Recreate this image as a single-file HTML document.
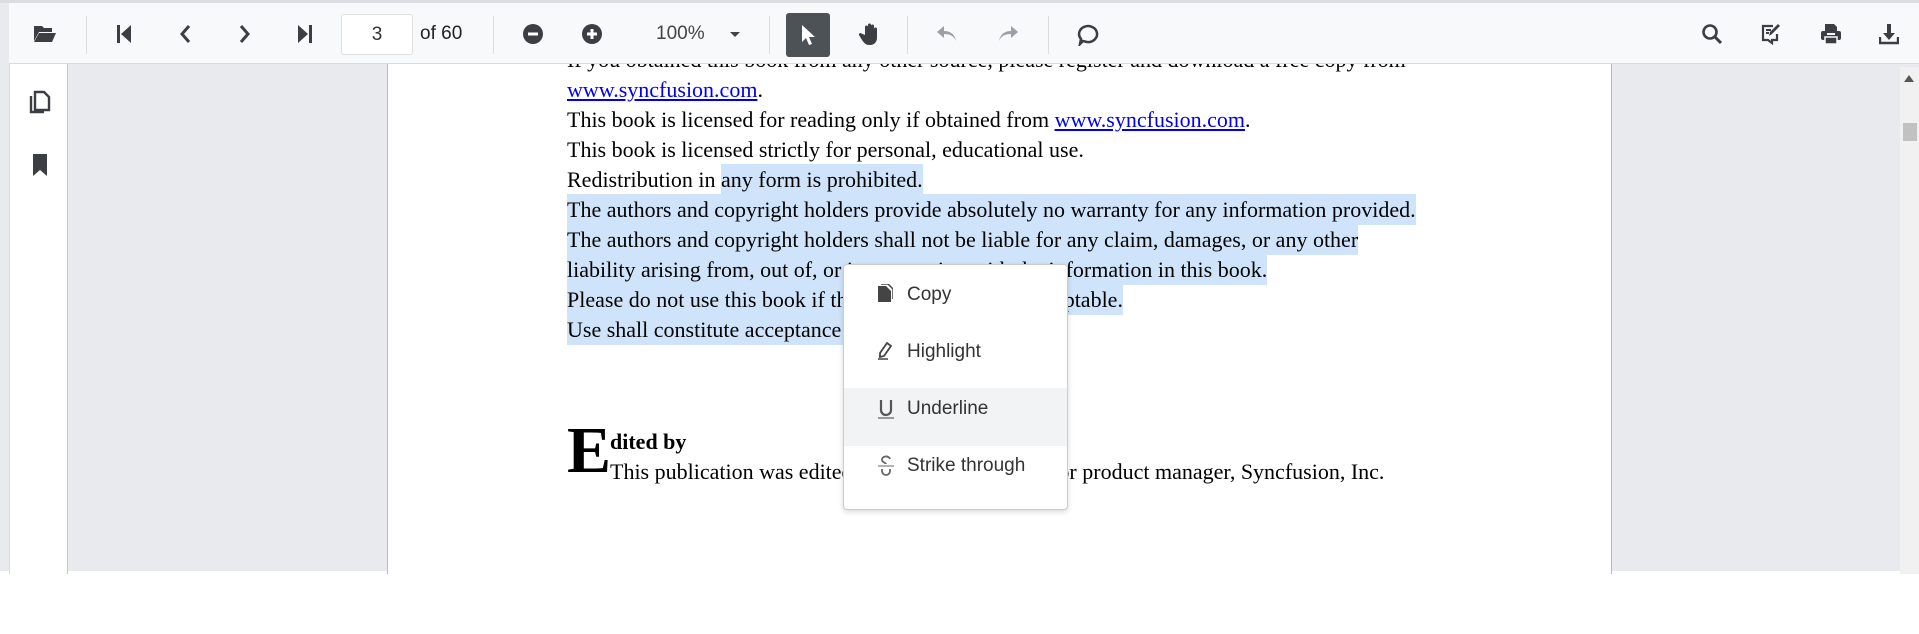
<!DOCTYPE html>
<html><head><meta charset="utf-8"><style>
*{margin:0;padding:0;box-sizing:border-box}
body{width:1919px;height:634px;overflow:hidden;background:#fff;position:relative;font-family:"Liberation Sans",sans-serif}
.viewer{position:absolute;left:0;top:0;width:1919px;height:571px;background:#e8eaed;border-top:3px solid #dcdde0}
.side{position:absolute;left:9px;top:0;width:59px;height:571px;background:#fff;border-left:1px solid #dadada;border-right:1px solid #c8c8c8}
.page{position:absolute;left:387px;top:0;width:1225px;height:571px;background:#fff;border-left:1px solid #bbb;border-right:1px solid #bbb}
.scroll{position:absolute;left:1900px;top:64px;width:19px;height:507px;background:#f1f1f1}
.tb{position:absolute;left:9px;top:3px;width:1910px;height:61px;background:#f8f9fa;border-bottom:1px solid #dadce0;z-index:5}
.ic{position:absolute;top:0;height:61px;display:flex;align-items:center;justify-content:center}
.sep{position:absolute;top:13px;width:1px;height:38px;background:#dcdcdc}
.txt{position:absolute;left:567px;font-family:"Liberation Serif",serif;font-size:22px;color:#000;white-space:nowrap;line-height:30px}
.hl{background:#cfe4fb;padding:3px 0}
a{color:#0000ee;text-decoration:underline}
.menu{position:absolute;left:843px;top:264px;width:225px;height:246px;background:#fff;border:1px solid #ccc;border-radius:4px;box-shadow:0 2px 6px rgba(0,0,0,.15);z-index:6}
.mi{position:absolute;left:0;width:223px;height:57px;font-size:19px;color:#333}
.mi span.t{position:absolute;left:63px;top:0;line-height:40px}
.mi svg{position:absolute;left:33px;top:9px}
</style></head><body>
<div class="viewer">
<div class="side">
<svg style="position:absolute;left:19px;top:87px" width="22" height="24" viewBox="0 0 22 24"><path d="M6 2h9l5 5v13H6z" fill="none" stroke="#3b3f44" stroke-width="2.4"/><path d="M2 6v16h13" fill="none" stroke="#3b3f44" stroke-width="2.4"/></svg>
<svg style="position:absolute;left:21px;top:150px" width="18" height="24" viewBox="0 0 18 24"><path d="M2 1h14v22l-7-6-7 6z" fill="#3b3f44"/></svg>
</div>
<div class="page"></div>
<div class="scroll"><div style="position:absolute;left:4px;top:8px;border:5px solid transparent;border-bottom:7px solid #555;border-top:0"></div><div style="position:absolute;left:3px;top:56px;width:14px;height:18px;background:#c1c1c1"></div></div>
</div>

<div class="txt" style="top:45px">If you obtained this book from any other source, please register and download a free copy from</div>
<div class="txt" style="top:75px"><a>www.syncfusion.com</a>.</div>
<div class="txt" style="top:105px">This book is licensed for reading only if obtained from <a>www.syncfusion.com</a>.</div>
<div class="txt" style="top:135px">This book is licensed strictly for personal, educational use.</div>
<div class="txt" style="top:165px">Redistribution in <span class="hl">any form is prohibited.</span></div>
<div class="txt" style="top:195px"><span class="hl">The authors and copyright holders provide absolutely no warranty for any information provided.</span></div>
<div class="txt" style="top:225px"><span class="hl">The authors and copyright holders shall not be liable for any claim, damages, or any other</span></div>
<div class="txt" style="top:255px"><span class="hl">liability arising from, out of, or in connection with the information in this book.</span></div>
<div class="txt" style="top:285px"><span class="hl">Please do not use this book if the listed terms are unacceptable.</span></div>
<div class="txt" style="top:315px"><span class="hl">Use shall constitute acceptance of the terms </span></div>
<div class="txt" style="top:416px;font-size:66px;font-weight:bold;line-height:70px">E</div>
<div class="txt" style="top:427px;left:610px;font-weight:bold">dited by</div>
<div class="txt" style="top:457px;left:610px">This publication was edited by Daniel Jebaraj, senior product manager, Syncfusion, Inc.</div>

<div class="tb">
<div class="ic" style="left:24px"><svg width="24" height="20" viewBox="0 0 24 20"><path d="M1 2h8l2 2h8v4H6L1 17z" fill="#3b3f44"/><path d="M6 9h17l-4 9H1z" fill="#3b3f44"/></svg></div>
<div class="sep" style="left:77px"></div>
<div class="ic" style="left:106px"><svg width="18" height="20" viewBox="0 0 18 20"><rect x="2" y="1" width="3" height="18" fill="#3b3f44"/><path d="M16 1v18L6 10z" fill="#3b3f44"/></svg></div>
<div class="ic" style="left:169px"><svg width="14" height="20" viewBox="0 0 14 20"><path d="M11 2 4 10l7 8" fill="none" stroke="#3b3f44" stroke-width="3"/></svg></div>
<div class="ic" style="left:229px"><svg width="14" height="20" viewBox="0 0 14 20"><path d="M3 2l7 8-7 8" fill="none" stroke="#3b3f44" stroke-width="3"/></svg></div>
<div class="ic" style="left:287px"><svg width="18" height="20" viewBox="0 0 18 20"><path d="M2 1v18l10-9z" fill="#3b3f44"/><rect x="13" y="1" width="3" height="18" fill="#3b3f44"/></svg></div>
<div style="position:absolute;left:332px;top:11px;width:72px;height:41px;background:#fff;border:1px solid #e0e0e0;border-radius:3px;font-size:19px;color:#333;text-align:center;line-height:39px">3</div>
<div style="position:absolute;left:411px;top:0;line-height:61px;font-size:19px;color:#222">of 60</div>
<div class="sep" style="left:484px"></div>
<div class="ic" style="left:513px"><svg width="22" height="22"><circle cx="11" cy="11" r="10" fill="#3b3f44"/><rect x="6" y="9.5" width="10" height="3" fill="#fff"/></svg></div>
<div class="ic" style="left:572px"><svg width="22" height="22"><circle cx="11" cy="11" r="10" fill="#3b3f44"/><rect x="6" y="9.5" width="10" height="3" fill="#fff"/><rect x="9.5" y="6" width="3" height="10" fill="#fff"/></svg></div>
<div style="position:absolute;left:647px;top:0;line-height:61px;font-size:19px;color:#444">100%</div>
<div style="position:absolute;left:721px;top:29px;border:5px solid transparent;border-top:5px solid #444;border-bottom:0"></div>
<div class="sep" style="left:760px"></div>
<div style="position:absolute;left:777px;top:10px;width:44px;height:44px;background:#4d5257;border-radius:3px;display:flex;align-items:center;justify-content:center"><svg width="16" height="22" viewBox="0 0 16 22"><path d="M2 1v17l4-4 3 7 3-1-3-7h6z" fill="#fff"/></svg></div>
<div class="ic" style="left:850px"><svg width="22" height="24" viewBox="0 0 22 24"><path d="M6 13V5a1.5 1.5 0 013 0v6V3a1.5 1.5 0 013 0v8V4a1.5 1.5 0 013 0v8V7a1.5 1.5 0 013 0v9c0 4-3 7-7 7h-1c-3 0-5-2-7-5l-3-5a1.5 1.5 0 012.5-1.5z" fill="#3b3f44"/></svg></div>
<div class="sep" style="left:898px"></div>
<div class="ic" style="left:927px"><svg width="22" height="18" viewBox="0 0 22 18"><path d="M8 1 1 7l7 6V9c6 0 10 2 12 7-1-6-5-10-12-10z" fill="#9aa0a6"/></svg></div>
<div class="ic" style="left:988px"><svg width="22" height="18" viewBox="0 0 22 18"><path d="M14 1l7 6-7 6V9C8 9 4 11 2 16 3 10 7 6 14 6z" fill="#9aa0a6"/></svg></div>
<div class="sep" style="left:1039px"></div>
<div class="ic" style="left:1067px"><svg width="24" height="24" viewBox="0 0 24 24"><path d="M7 19 4 22l1-5a9 8 0 116 3z" fill="none" stroke="#3b3f44" stroke-width="2.5"/></svg></div>
<div class="ic" style="left:1692px"><svg width="22" height="22"><circle cx="9" cy="9" r="6.5" fill="none" stroke="#3b3f44" stroke-width="2.6"/><path d="M14 14l6 6" stroke="#3b3f44" stroke-width="3"/></svg></div>
<div class="ic" style="left:1751px"><svg width="22" height="22" viewBox="0 0 22 22"><path d="M13 3H3v14h5l4 3v-3h5v-6" fill="none" stroke="#3b3f44" stroke-width="2.2"/><path d="M9 13l1-4 8-8 2 2-8 8z" fill="#3b3f44"/><path d="M6 7h5M6 10h3" stroke="#3b3f44" stroke-width="2"/></svg></div>
<div class="ic" style="left:1811px"><svg width="22" height="22" viewBox="0 0 22 22"><path d="M5 1h9l3 3v4H5z" fill="#3b3f44"/><rect x="1" y="8" width="20" height="9" rx="2" fill="#3b3f44"/><rect x="5" y="14" width="12" height="7" fill="#3b3f44" stroke="#f8f9fa" stroke-width="1.5"/><rect x="7" y="10" width="8" height="2" fill="#f8f9fa"/></svg></div>
<div class="ic" style="left:1870px"><svg width="20" height="22" viewBox="0 0 20 22"><path d="M8 1h4v9h4l-6 7-6-7h4z" fill="#3b3f44"/><path d="M1 14v6h18v-6" fill="none" stroke="#3b3f44" stroke-width="2.4"/></svg></div>
</div>

<div class="menu">
<div style="position:absolute;left:0;top:123px;width:223px;height:58px;background:#f2f3f4"></div>
<div class="mi" style="top:10px"><svg width="16" height="20" viewBox="0 0 16 20"><path d="M1 2h8l5 5v11H1z" fill="#444"/><path d="M4 0h7l5 5v10" fill="none" stroke="#444" stroke-width="1.5"/></svg><span class="t">Copy</span></div>
<div class="mi" style="top:67px"><svg width="16" height="20" viewBox="0 0 16 20"><path d="M10 2l4 3-7 10-4 1 0-4z" fill="none" stroke="#444" stroke-width="1.8"/><path d="M1 18h10" stroke="#444" stroke-width="1.5"/></svg><span class="t">Highlight</span></div>
<div class="mi" style="top:124px"><svg width="18" height="22" viewBox="0 0 18 22"><path d="M4 2v10a5 5 0 0010 0V2" fill="none" stroke="#555" stroke-width="2.2"/><path d="M1 20h16" stroke="#999" stroke-width="2"/></svg><span class="t">Underline</span></div>
<div class="mi" style="top:181px"><svg width="18" height="22" viewBox="0 0 18 22"><path d="M13 4a4 3 0 00-8 1c0 2 4 3 4 4" fill="none" stroke="#666" stroke-width="1.8"/><path d="M1 11h16" stroke="#999" stroke-width="1.5"/><path d="M5 14v2a4 4 0 008 0v-2" fill="none" stroke="#666" stroke-width="1.8"/></svg><span class="t">Strike through</span></div>
</div>
</body></html>
